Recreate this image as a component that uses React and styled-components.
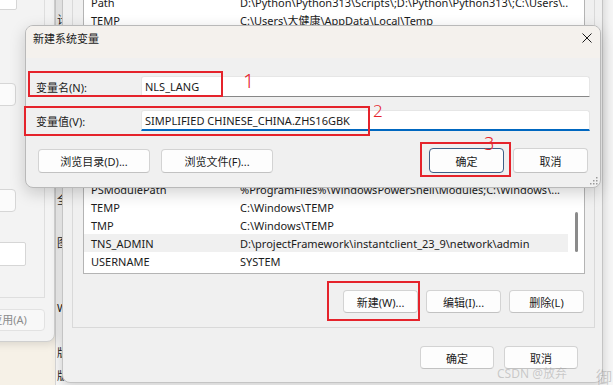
import React from "react";
import styled, { createGlobalStyle } from "styled-components";

const GlobalStyle = createGlobalStyle`
  html, body { margin: 0; padding: 0; }
  body {
    width: 613px;
    height: 385px;
    overflow: hidden;
    background: #f6f1e7;
    font-family: "Noto Sans", "Noto Sans CJK SC", sans-serif;
    font-size: 11px;
    color: #1b1b1b;
  }
  * { box-sizing: border-box; }
`;

const Desktop = styled.div`
  position: relative;
  width: 613px;
  height: 385px;
  overflow: hidden;
`;

/* ---------- window far behind (system properties) ---------- */
const BackWindow = styled.section`
  position: absolute;
  left: 55px;
  top: -20px;
  width: 600px;
  height: 420px;
  background: #f7f7f7;
  border-left: 1px solid #d6d6d6;
  display: flex;
  flex-direction: column;
  padding-left: 1px;
`;

const BackLabel = styled.div`
  margin-top: ${(p) => p.$gap}px;
  height: 16px;
  line-height: 16px;
  white-space: nowrap;
  color: #1b1b1b;
`;

/* ---------- left window ---------- */
const LeftWindow = styled.section`
  position: absolute;
  left: -60px;
  top: -20px;
  width: 115px;
  height: 362px;
  background: #f3f3f3;
  border: 1px solid #cfcfcf;
  border-radius: 0 0 8px 0;
  box-shadow: 2px 2px 8px rgba(0, 0, 0, 0.12);
  display: flex;
  flex-direction: column;
  padding: 5px 9px 9px 10px;
`;

const LeftGroup = styled.div`
  border: 1px solid #dedede;
  display: flex;
  flex-direction: column;
  align-items: flex-end;
  padding-bottom: 31px;
`;

const LeftField = styled.div`
  margin-top: ${(p) => p.$gap}px;
  margin-right: ${(p) => p.$inset}px;
  width: 70px;
  height: ${(p) => p.$h}px;
  background: ${(p) => (p.$input ? "#ffffff" : "#fbfbfb")};
  border: 1px solid #d6d6d6;
  border-radius: ${(p) => (p.$input ? 2 : 4)}px;
`;

const ApplyButton = styled.div`
  align-self: flex-end;
  margin-top: 11px;
  width: 72px;
  height: 22px;
  line-height: 20px;
  text-align: center;
  background: #f8f8f8;
  border: 1px solid #e2e2e2;
  border-radius: 4px;
  color: #8c8c8c;
  white-space: nowrap;
`;

/* ---------- environment variables window ---------- */
const EnvWindow = styled.section`
  position: absolute;
  left: 62px;
  top: -40px;
  width: 541px;
  height: 423px;
  background: #f0f0f0;
  border: 1px solid #c4c4c4;
  border-radius: 0 0 8px 8px;
  box-shadow: 0 2px 12px rgba(0, 0, 0, 0.18);
  display: flex;
  flex-direction: column;
  padding: 19px 7px 0 9px;
`;

const GroupBox = styled.div`
  border: 1px solid #d9d9d9;
  padding: 11px 9px 14px 10px;
  display: flex;
  flex-direction: column;
`;

const ListBox = styled.div`
  height: 282px;
  background: #ffffff;
  border: 1px solid #b4b4b4;
  display: flex;
  overflow: hidden;
`;

const Rows = styled.div`
  flex: 1;
  display: flex;
  flex-direction: column;
  min-width: 0;
`;

const Row = styled.div`
  height: 18px;
  flex: none;
  display: flex;
  align-items: center;
  padding-left: 7px;
  background: ${(p) => (p.$selected ? "#f0f0f0" : "transparent")};
  white-space: nowrap;
`;

const RowGap = styled.div`
  height: 151px;
  flex: none;
`;

const NameCell = styled.span`
  width: 149px;
  flex: none;
`;

const ValueCell = styled.span`
  flex: 1;
  overflow: hidden;
`;

const ScrollTrack = styled.div`
  width: 16px;
  flex: none;
  display: flex;
  flex-direction: column;
  padding-left: 7px;
`;

const ScrollThumb = styled.div`
  margin-top: ${(p) => p.$top}px;
  width: 3px;
  height: 40px;
  border-radius: 2px;
  background: #8b8b8b;
`;

const ButtonRow = styled.div`
  display: flex;
  justify-content: flex-end;
  gap: ${(p) => p.$gap}px;
  margin-top: ${(p) => p.$top}px;
  padding-right: ${(p) => p.$inset}px;
`;

const Button = styled.div`
  width: ${(p) => p.$w}px;
  height: ${(p) => p.$h || 23}px;
  display: flex;
  align-items: center;
  justify-content: center;
  background: #fdfdfd;
  border: 1px solid ${(p) => (p.$default ? "#3e5f86" : "#d3d3d3")};
  border-bottom-color: ${(p) => (p.$default ? "#3e5f86" : "#c2c2c2")};
  border-radius: 4px;
  color: #1b1b1b;
  white-space: nowrap;
`;

/* ---------- new system variable dialog ---------- */
const Dialog = styled.section`
  position: absolute;
  left: 25px;
  top: 25px;
  width: 576px;
  height: 163px;
  background: #f0f0f0;
  border: 1px solid #b9b9b9;
  border-radius: 8px;
  box-shadow: 0 5px 16px rgba(0, 0, 0, 0.18);
  overflow: hidden;
  display: flex;
  flex-direction: column;
`;

const TitleBar = styled.header`
  height: 32px;
  flex: none;
  background: #f4f1ed;
  display: flex;
  align-items: center;
  justify-content: space-between;
  padding: 0 8px 9px 7px;
`;

const Form = styled.div`
  display: flex;
  flex-direction: column;
  padding: 0 10px;
`;

const FieldRow = styled.div`
  display: flex;
  align-items: center;
  height: 21px;
  margin-top: ${(p) => p.$top}px;
`;

const FieldLabel = styled.label`
  width: 105px;
  flex: none;
  white-space: nowrap;
`;

const TextInput = styled.div`
  flex: 1;
  height: 21px;
  background: #ffffff;
  border: 1px solid #e6e6e6;
  border-bottom: ${(p) => (p.$focused ? "2px solid #0067c0" : "1px solid #878787")};
  border-radius: 3px 3px 0 0;
  display: flex;
  align-items: center;
  padding-left: 3px;
  white-space: nowrap;
`;

const DialogButtons = styled.div`
  display: flex;
  align-items: center;
  margin-top: 17px;
  padding: 0 2px;
`;

const ButtonGroup = styled.div`
  display: flex;
  gap: ${(p) => p.$gap}px;
`;

const Spacer = styled.div`
  flex: 1;
`;

const Grip = styled.svg`
  position: absolute;
  right: 2px;
  bottom: 2px;
`;

/* ---------- annotations ---------- */
const Mark = styled.div`
  position: absolute;
  left: ${(p) => p.$x}px;
  top: ${(p) => p.$y}px;
  width: ${(p) => p.$w}px;
  height: ${(p) => p.$h}px;
  border: 2px solid #e5232b;
`;

const MarkNumber = styled.div`
  position: absolute;
  left: ${(p) => p.$x}px;
  top: ${(p) => p.$y}px;
  font-size: ${(p) => p.$size}px;
  line-height: 1;
  font-weight: 300;
  color: #e5232b;
`;

const Watermark = styled.div`
  position: absolute;
  left: ${(p) => p.$x}px;
  top: ${(p) => p.$y}px;
  font-size: ${(p) => p.$size}px;
  color: rgba(150, 150, 150, 0.45);
  white-space: nowrap;
`;

const topRows = [
  ["Path", "D:\\Python\\Python313\\Scripts\\;D:\\Python\\Python313\\;C:\\Users\\..."],
  ["TEMP", "C:\\Users\\大健康\\AppData\\Local\\Temp"],
];

const bottomRows = [
  ["PSModulePath", "%ProgramFiles%\\WindowsPowerShell\\Modules;C:\\Windows\\..."],
  ["TEMP", "C:\\Windows\\TEMP"],
  ["TMP", "C:\\Windows\\TEMP"],
  ["TNS_ADMIN", "D:\\projectFramework\\instantclient_23_9\\network\\admin", true],
  ["USERNAME", "SYSTEM"],
];

export default function App() {
  return (
    <Desktop>
      <GlobalStyle />

      <BackWindow>
        <BackLabel $gap={32}>计算机描述</BackLabel>
        <BackLabel $gap={164}>全名</BackLabel>
        <BackLabel $gap={27}>图片</BackLabel>
        <BackLabel $gap={49}>Windows 版本</BackLabel>
        <BackLabel $gap={29}>版本</BackLabel>
        <BackLabel $gap={7}>版权</BackLabel>
      </BackWindow>

      <LeftWindow>
        <LeftGroup>
          <LeftField $gap={9} $inset={27} $h={14} $input />
          <LeftField $gap={73} $inset={28} $h={23} />
          <LeftField $gap={83} $inset={28} $h={23} />
          <LeftField $gap={30} $inset={18} $h={24} $input />
        </LeftGroup>
        <ApplyButton>应用(A)</ApplyButton>
      </LeftWindow>

      <EnvWindow>
        <GroupBox>
          <ListBox>
            <Rows>
              {topRows.map(([name, value]) => (
                <Row key={name + value}>
                  <NameCell>{name}</NameCell>
                  <ValueCell>{value}</ValueCell>
                </Row>
              ))}
              <RowGap />
              {bottomRows.map(([name, value, selected]) => (
                <Row key={name + value} $selected={selected}>
                  <NameCell>{name}</NameCell>
                  <ValueCell>{value}</ValueCell>
                </Row>
              ))}
            </Rows>
            <ScrollTrack>
              <ScrollThumb $top={219} />
            </ScrollTrack>
          </ListBox>
          <ButtonRow $gap={8} $top={16} $inset={1}>
            <Button $w={75}>新建(W)...</Button>
            <Button $w={75}>编辑(I)...</Button>
            <Button $w={75}>删除(L)</Button>
          </ButtonRow>
        </GroupBox>
        <ButtonRow $gap={10} $top={18} $inset={17}>
          <Button $w={74}>确定</Button>
          <Button $w={74}>取消</Button>
        </ButtonRow>
      </EnvWindow>

      <Dialog>
        <TitleBar>
          <span>新建系统变量</span>
          <svg width="10" height="10" viewBox="0 0 10 10">
            <path d="M0.5 0.5 L9.5 9.5 M9.5 0.5 L0.5 9.5" stroke="#1b1b1b" strokeWidth="1" />
          </svg>
        </TitleBar>
        <Form>
          <FieldRow $top={18}>
            <FieldLabel>变量名(N):</FieldLabel>
            <TextInput>NLS_LANG</TextInput>
          </FieldRow>
          <FieldRow $top={13}>
            <FieldLabel>变量值(V):</FieldLabel>
            <TextInput $focused>SIMPLIFIED CHINESE_CHINA.ZHS16GBK</TextInput>
          </FieldRow>
          <DialogButtons>
            <ButtonGroup $gap={11}>
              <Button $w={112} $h={24}>浏览目录(D)...</Button>
              <Button $w={112} $h={24}>浏览文件(F)...</Button>
            </ButtonGroup>
            <Spacer />
            <ButtonGroup $gap={9}>
              <Button $w={75} $h={25} $default>确定</Button>
              <Button $w={75} $h={25}>取消</Button>
            </ButtonGroup>
          </DialogButtons>
        </Form>
        <Grip width="8" height="8" viewBox="0 0 8 8">
          <g fill="#9a9a9a">
            <rect x="6" y="0" width="1.5" height="1.5" />
            <rect x="3" y="3" width="1.5" height="1.5" />
            <rect x="6" y="3" width="1.5" height="1.5" />
            <rect x="0" y="6" width="1.5" height="1.5" />
            <rect x="3" y="6" width="1.5" height="1.5" />
            <rect x="6" y="6" width="1.5" height="1.5" />
          </g>
        </Grip>
      </Dialog>

      <Mark $x={28} $y={71} $w={195} $h={26} />
      <MarkNumber $x={243} $y={71} $size={20}>1</MarkNumber>
      <Mark $x={24} $y={106} $w={346} $h={30} />
      <MarkNumber $x={373} $y={102} $size={17}>2</MarkNumber>
      <Mark $x={420} $y={142} $w={91} $h={35} />
      <MarkNumber $x={484} $y={134} $size={18}>3</MarkNumber>
      <Mark $x={327} $y={281} $w={93} $h={40} />

      <Watermark $x={497} $y={364} $size={12}>CSDN @放弃</Watermark>
      <Watermark $x={596} $y={364} $size={16}>御</Watermark>
    </Desktop>
  );
}
